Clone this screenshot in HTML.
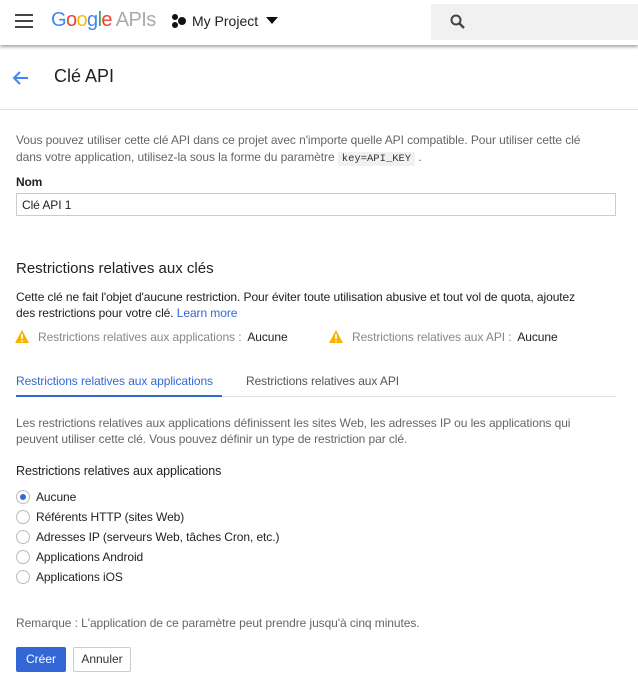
<!DOCTYPE html>
<html><head><meta charset="utf-8"><style>
*{margin:0;padding:0;box-sizing:border-box}
body{width:638px;height:690px;background:#fff;font-family:"Liberation Sans",Arial,sans-serif;position:relative;overflow:hidden;color:#212121}
.a{position:absolute;white-space:nowrap}
.t{font-size:12px;letter-spacing:-0.08px;color:#666}
.d{font-size:12px;letter-spacing:-0.08px;color:#212121}
.radio{position:absolute;left:16px;width:14px;height:14px;border:1px solid #bbb;border-radius:50%;background:#fff}
</style></head><body>
<div class="a" style="left:0;top:0;width:638px;height:45px;background:#fff;box-shadow:0 2px 3px rgba(0,0,0,.35)"></div>
<div class="a" style="left:15px;top:14px;width:18px;height:2px;background:#444;box-shadow:0 6px 0 #444,0 12px 0 #444"></div>
<div class="a" style="left:51px;top:9px;font-size:20px;letter-spacing:-0.6px"><span style="color:#4285f4">G</span><span style="color:#ea4335">o</span><span style="color:#fbbc05">o</span><span style="color:#4285f4">g</span><span style="color:#34a853">l</span><span style="color:#ea4335">e</span><span style="color:#aaa"> APIs</span></div>
<svg class="a" style="left:171px;top:13px" width="16" height="16"><circle cx="4" cy="4" r="3" fill="#111"/><circle cx="4" cy="12" r="3" fill="#111"/><circle cx="11" cy="8" r="4" fill="#111"/></svg>
<div class="a" style="left:192px;top:13px;font-size:14px;color:#212121">My Project</div>
<svg class="a" style="left:266px;top:17px" width="12" height="7"><path d="M0 0H12L6 7Z" fill="#111"/></svg>
<div class="a" style="left:431px;top:4px;width:207px;height:36px;background:#f1f1f1"></div>
<svg class="a" style="left:450px;top:14px" width="16" height="16"><circle cx="6" cy="6" r="4.5" fill="none" stroke="#444" stroke-width="2"/><path d="M9.5 9.5L14 14" stroke="#444" stroke-width="2.4"/></svg>
<svg class="a" style="left:11px;top:70px" width="18" height="16"><path d="M17 8H3M9 2L3 8L9 14" fill="none" stroke="#4285f4" stroke-width="2"/></svg>
<div class="a" style="left:54px;top:66px;font-size:18px;color:#212121">Clé API</div>
<div class="a" style="left:0;top:109px;width:638px;height:1px;background:#e0e0e0"></div>
<div class="a t" style="left:16px;top:133px">Vous pouvez utiliser cette clé API dans ce projet avec n'importe quelle API compatible. Pour utiliser cette clé</div>
<div class="a t" style="left:16px;top:150px">dans votre application, utilisez-la sous la forme du paramètre <span style="font-family:'Liberation Mono',monospace;font-size:10.5px;background:#f1f1f1;color:#333;padding:1px 4px;letter-spacing:0">key=API_KEY</span> .</div>
<div class="a" style="left:16px;top:175px;font-size:12px;font-weight:bold;color:#212121;letter-spacing:-0.2px">Nom</div>
<div class="a" style="left:16px;top:193px;width:600px;height:23px;border:1px solid #ccc"></div>
<div class="a d" style="left:22px;top:198px">Clé API 1</div>
<div class="a" style="left:16px;top:260px;font-size:15px;color:#212121">Restrictions relatives aux clés</div>
<div class="a d" style="left:16px;top:290px">Cette clé ne fait l'objet d'aucune restriction. Pour éviter toute utilisation abusive et tout vol de quota, ajoutez</div>
<div class="a d" style="left:16px;top:306px">des restrictions pour votre clé. <span style="color:#3367d6">Learn more</span></div>
<svg class="a" style="left:15px;top:330px" width="14" height="13"><path d="M7 0L14 13H0Z" fill="#f4b400"/><path d="M7 4V9M7 10.5V12" stroke="#fff" stroke-width="1.6"/></svg>
<div class="a t" style="left:38px;top:330px;color:#888">Restrictions relatives aux applications :&nbsp; <span style="color:#212121">Aucune</span></div>
<svg class="a" style="left:329px;top:330px" width="14" height="13"><path d="M7 0L14 13H0Z" fill="#f4b400"/><path d="M7 4V9M7 10.5V12" stroke="#fff" stroke-width="1.6"/></svg>
<div class="a t" style="left:352px;top:330px;color:#888">Restrictions relatives aux API :&nbsp; <span style="color:#212121">Aucune</span></div>
<div class="a t" style="left:16px;top:374px;color:#3367d6">Restrictions relatives aux applications</div>
<div class="a t" style="left:246px;top:374px;color:#555">Restrictions relatives aux API</div>
<div class="a" style="left:16px;top:396px;width:600px;height:1px;background:#ddd"></div>
<div class="a" style="left:16px;top:395px;width:206px;height:2px;background:#3367d6"></div>
<div class="a t" style="left:16px;top:416px">Les restrictions relatives aux applications définissent les sites Web, les adresses IP ou les applications qui</div>
<div class="a t" style="left:16px;top:432px">peuvent utiliser cette clé. Vous pouvez définir un type de restriction par clé.</div>
<div class="a d" style="left:16px;top:464px;font-size:12.5px">Restrictions relatives aux applications</div>
<div class="radio" style="top:490px;border-color:#bbb"><div style="position:absolute;left:3px;top:3px;width:6px;height:6px;border-radius:50%;background:#3367d6"></div></div>
<div class="a d" style="left:36px;top:490px">Aucune</div>
<div class="radio" style="top:510px"></div><div class="a d" style="left:36px;top:510px">Référents HTTP (sites Web)</div>
<div class="radio" style="top:530px"></div><div class="a d" style="left:36px;top:530px">Adresses IP (serveurs Web, tâches Cron, etc.)</div>
<div class="radio" style="top:550px"></div><div class="a d" style="left:36px;top:550px">Applications Android</div>
<div class="radio" style="top:570px"></div><div class="a d" style="left:36px;top:570px">Applications iOS</div>
<div class="a t" style="left:16px;top:616px">Remarque : L'application de ce paramètre peut prendre jusqu'à cinq minutes.</div>
<div class="a" style="left:16px;top:647px;width:50px;height:25px;background:#3367d6;border-radius:2px;color:#fff;font-size:12px;text-align:center;line-height:25px">Créer</div>
<div class="a" style="left:73px;top:647px;width:58px;height:25px;border:1px solid #ccc;border-radius:2px;color:#333;font-size:12px;text-align:center;line-height:23px">Annuler</div>
</body></html>
